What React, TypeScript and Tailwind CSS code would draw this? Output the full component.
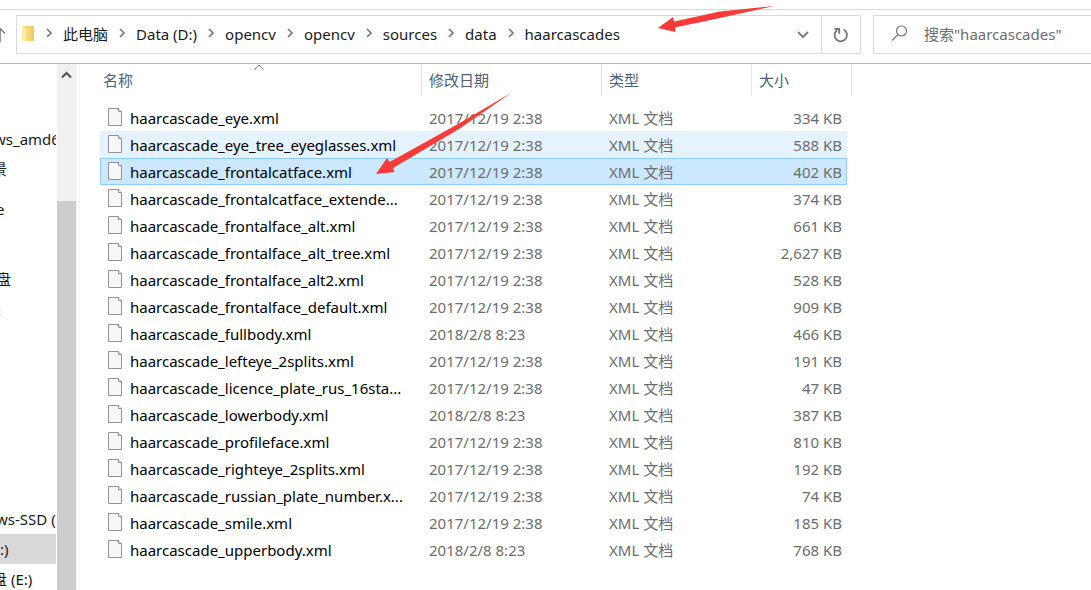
import { Fragment, useState } from 'react'
import clsx from 'clsx'

interface FileEntry {
  name: string
  date: string
  size: string
}

const CRUMBS = ['此电脑', 'Data (D:)', 'opencv', 'opencv', 'sources', 'data', 'haarcascades']

const FILES: FileEntry[] = [
  { name: 'haarcascade_eye.xml', date: '2017/12/19 2:38', size: '334 KB' },
  { name: 'haarcascade_eye_tree_eyeglasses.xml', date: '2017/12/19 2:38', size: '588 KB' },
  { name: 'haarcascade_frontalcatface.xml', date: '2017/12/19 2:38', size: '402 KB' },
  { name: 'haarcascade_frontalcatface_extende...', date: '2017/12/19 2:38', size: '374 KB' },
  { name: 'haarcascade_frontalface_alt.xml', date: '2017/12/19 2:38', size: '661 KB' },
  { name: 'haarcascade_frontalface_alt_tree.xml', date: '2017/12/19 2:38', size: '2,627 KB' },
  { name: 'haarcascade_frontalface_alt2.xml', date: '2017/12/19 2:38', size: '528 KB' },
  { name: 'haarcascade_frontalface_default.xml', date: '2017/12/19 2:38', size: '909 KB' },
  { name: 'haarcascade_fullbody.xml', date: '2018/2/8 8:23', size: '466 KB' },
  { name: 'haarcascade_lefteye_2splits.xml', date: '2017/12/19 2:38', size: '191 KB' },
  { name: 'haarcascade_licence_plate_rus_16sta...', date: '2017/12/19 2:38', size: '47 KB' },
  { name: 'haarcascade_lowerbody.xml', date: '2018/2/8 8:23', size: '387 KB' },
  { name: 'haarcascade_profileface.xml', date: '2017/12/19 2:38', size: '810 KB' },
  { name: 'haarcascade_righteye_2splits.xml', date: '2017/12/19 2:38', size: '192 KB' },
  { name: 'haarcascade_russian_plate_number.x...', date: '2017/12/19 2:38', size: '74 KB' },
  { name: 'haarcascade_smile.xml', date: '2017/12/19 2:38', size: '185 KB' },
  { name: 'haarcascade_upperbody.xml', date: '2018/2/8 8:23', size: '768 KB' },
]

// The tree is scrolled sideways, so each label starts left of the pane
const NAV_ITEMS = [
  { label: 'ws_amd64', className: 'mt-15 -ml-1.5' },
  { label: '景', className: '-ml-2' },
  { label: 'e', className: 'mt-2.5 -ml-1' },
  { label: '盘', className: 'mt-10 -ml-1' },
  { label: '乐', className: '-ml-3.5' },
  { label: 'ws-SSD (C:)', className: 'mt-45 -ml-1' },
  { label: ':)', className: '', active: true },
  { label: '盘 (E:)', className: '-ml-2' },
]

function Chevron() {
  return (
    <svg width="6" height="10" viewBox="0 0 6 10" className="mb-0.5 shrink-0" fill="none" stroke="#7a7a7a" strokeWidth="1.7">
      <path d="M1 1l4 4-4 4" />
    </svg>
  )
}

function FolderIcon() {
  return (
    <svg width="13" height="18" viewBox="0 0 13 18" className="shrink-0">
      <path d="M1 1h11v15H3z" fill="#f8d775" />
      <path d="M9 1h3v15H9z" fill="#f2ca62" />
      <path d="M0 1l4 2v14.500l-1.500-1.500H0z" fill="#ffe9a6" />
    </svg>
  )
}

function FileIcon() {
  return (
    <svg width="15" height="19" viewBox="0 0 15 19" className="shrink-0">
      <path d="M.5.5h10l3 3v14H.5z" fill="#f5f7f8" stroke="#929292" />
      <path d="M10.500.5v3h3" fill="#fff" stroke="#929292" />
    </svg>
  )
}

function AddressBar() {
  return (
    <div className="mt-[9px] flex h-[55px] items-start border-y border-t-[#d9d9d9] border-b-[#b9b9b9] pt-[5px]">
      <button type="button" aria-label="向上" className="flex h-[39px] w-4 shrink-0 items-center">
        <svg width="8" height="16" viewBox="0 0 8 16" fill="none" stroke="#777" strokeWidth="1.500">
          <path d="M0 15.500V1.500M-5 6.500l5-5 5 5" />
        </svg>
      </button>
      <div className="flex h-[39px] min-w-0 flex-1 items-stretch border border-[#d9d9d9]">
        <nav aria-label="地址" className="flex min-w-0 flex-1 items-center gap-[11px] pb-0.5 pl-[5px] whitespace-nowrap">
          <FolderIcon />
          {CRUMBS.map((crumb, i) => (
            <Fragment key={i}>
              <Chevron />
              <button type="button">{crumb}</button>
            </Fragment>
          ))}
        </nav>
        <button type="button" aria-label="以前的位置" className="flex w-9 items-center justify-center">
          <svg width="12" height="8" viewBox="0 0 12 8" fill="none" stroke="#777" strokeWidth="1.800">
            <path d="M1 1l5 5 5-5" />
          </svg>
        </button>
        <button
          type="button"
          aria-label="刷新"
          className="flex w-[39px] items-center justify-center border-l border-[#d9d9d9]"
        >
          <svg width="16" height="16" viewBox="0 0 16 16" fill="none" stroke="#777" strokeWidth="1.800">
            <path d="M10.500 2.500a6.200 6.200 0 1 1-6.500.7" />
            <path d="M1.500 2h4.700v4.700" />
          </svg>
        </button>
      </div>
      <label className="ml-3 flex h-[39px] w-[218px] shrink-0 items-center border border-r-0 border-[#d9d9d9] pb-0.5 pl-[17px]">
        <svg width="17" height="17" viewBox="0 0 17 17" className="shrink-0" fill="none" stroke="#777" strokeWidth="1.200">
          <circle cx="10.500" cy="6" r="5" />
          <path d="M7 9.500L1 15.500" />
        </svg>
        <input
          type="text"
          aria-label="搜索"
          placeholder={'搜索"haarcascades"'}
          className="ml-4 min-w-0 flex-1 outline-none placeholder:text-[#6d6d6d]"
        />
      </label>
    </div>
  )
}

function NavPane() {
  return (
    <div className="flex shrink-0">
      <ul className="w-14 overflow-hidden whitespace-nowrap">
        {NAV_ITEMS.map((item) => (
          <li key={item.label} className={clsx('flex h-[30px] items-center', item.active && 'bg-[#d9d9d9]', item.className)}>
            {item.label}
          </li>
        ))}
      </ul>
      <div className="ml-px flex w-5 flex-col border-r border-[#f0f0f0] bg-[#f0f0f0]">
        <div className="flex h-[137px] shrink-0 justify-center pt-[7px]">
          <svg width="11" height="8" viewBox="0 0 11 8" fill="none" stroke="#505050" strokeWidth="2">
            <path d="M1 6.500l4.500-4.500L10 6.500" />
          </svg>
        </div>
        <div className="flex-1 bg-[#cdcdcd]" />
      </div>
    </div>
  )
}

function FileTable() {
  const [selected, setSelected] = useState(2)

  return (
    <table className="ml-5 w-[752px] table-fixed border-separate border-spacing-0 whitespace-nowrap">
      <colgroup>
        <col className="w-[322px]" />
        <col className="w-[180px]" />
        <col className="w-[150px]" />
        <col className="w-[95px]" />
        <col className="w-[5px]" />
      </colgroup>
      <thead>
        <tr className="h-8 text-left text-[#4c607a]">
          <th className="relative border-r border-[#e2e2e2] p-0 pl-[3px] font-normal">
            名称
            <svg
              width="10"
              height="6"
              viewBox="0 0 10 6"
              className="absolute top-0 left-[154px]"
              fill="none"
              stroke="#777"
            >
              <path d="M.5 5.500L5 1l4.500 4.500" />
            </svg>
          </th>
          <th className="border-r border-[#e2e2e2] p-0 pl-[7px] font-normal">修改日期</th>
          <th className="border-r border-[#e2e2e2] p-0 pl-[7px] font-normal">类型</th>
          <th colSpan={2} className="border-r border-[#e2e2e2] p-0 pl-[7px] font-normal">
            大小
          </th>
        </tr>
      </thead>
      <tbody>
        <tr className="h-2">
          <td colSpan={5} className="p-0" />
        </tr>
        {FILES.map((file, i) => {
          const isSelected = i === selected
          const cell = clsx(
            'border-y p-0',
            isSelected ? 'border-[#90cbfa] bg-[#cce8ff]' : i === 1 ? 'border-[#e5f3ff] bg-[#e5f3ff]' : 'border-transparent'
          )
          return (
            <tr key={file.name} className="h-[27px] text-[#6d6d6d]" onClick={() => setSelected(i)}>
              <td className={clsx(cell, 'border-l pl-[7px] text-black')}>
                <div className="flex items-center gap-[7px]">
                  <FileIcon />
                  <span>{file.name}</span>
                </div>
              </td>
              <td className={clsx(cell, 'pl-[7px]')}>{file.date}</td>
              <td className={clsx(cell, 'pl-[7px]')}>XML 文档</td>
              <td className={clsx(cell, 'border-r pr-1 text-right')}>{file.size}</td>
              <td className="p-0" />
            </tr>
          )
        })}
      </tbody>
    </table>
  )
}

export default function App() {
  return (
    <div className="relative flex h-screen flex-col overflow-hidden bg-white font-['Noto_Sans','Noto_Sans_CJK_SC',sans-serif] text-[15px] leading-5 text-[#1a1a1a]">
      <AddressBar />
      <div className="flex min-h-0 flex-1">
        <NavPane />
        <main className="ml-0.5 min-w-0 flex-1 overflow-hidden border-l border-[#f3f3f3]">
          <FileTable />
        </main>
      </div>

      <svg width="116" height="28" viewBox="0 0 116 28" className="pointer-events-none absolute top-[5px] left-[658px]">
        <path d="M0 23L15 12l1 4.500L62 6.500 116 1 62 13 17 22.500l.5 4.500z" fill="#fb3b37" />
      </svg>
      <svg width="136" height="82" viewBox="0 0 136 82" className="pointer-events-none absolute top-[93px] left-[376px]">
        <path d="M0 81L11 65l2.500 4L82 31 135 0 83 36 17 75l1.500 4z" fill="#fb3b37" />
      </svg>
    </div>
  )
}
